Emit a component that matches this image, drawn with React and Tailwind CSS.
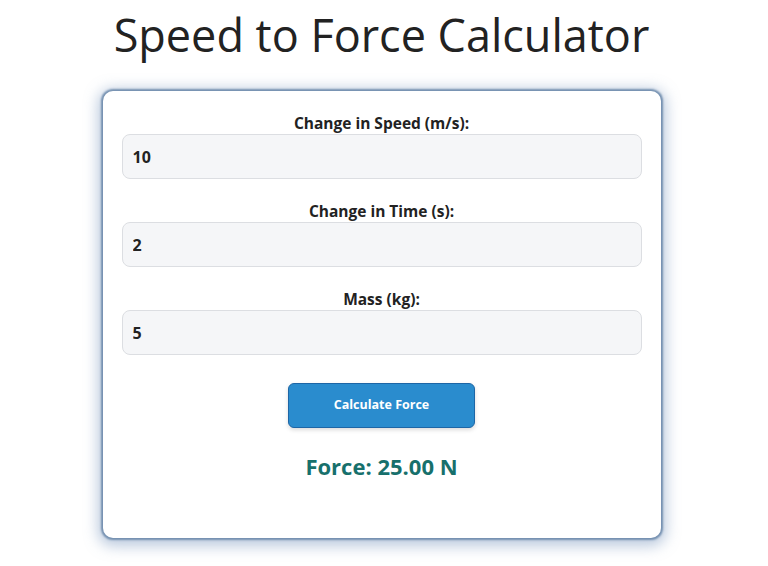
import { useState } from 'react'

const fields = [
  { id: 'speed', label: 'Change in Speed (m/s):', value: '10' },
  { id: 'time', label: 'Change in Time (s):', value: '2' },
  { id: 'mass', label: 'Mass (kg):', value: '5' },
]

export default function App() {
  const [values, setValues] = useState({ speed: '10', time: '2', mass: '5' })
  const [force, setForce] = useState(25)

  const calculate = () => {
    const dv = parseFloat(values.speed)
    const dt = parseFloat(values.time)
    const m = parseFloat(values.mass)
    if (dt) setForce((m * dv) / dt)
  }

  return (
    <div className="min-h-[566px] bg-white pr-[5px] flex flex-col items-center font-['Open_Sans',sans-serif] text-[#222]">
      <h1 className="mt-[7px] text-[45px] leading-[56px] text-[#222]">Speed to Force Calculator</h1>
      <div className="mt-[28px] w-[558px] h-[447px] rounded-[10px] bg-white px-[19px] pt-[22px] shadow-[0_0_2px_2px_rgba(105,135,170,0.9),0_3px_14px_5px_rgba(120,150,190,0.5)]">
        {fields.map((f) => (
          <div key={f.id} className="mb-[22px] flex flex-col">
            <label htmlFor={f.id} className="mb-px text-center text-[15.5px] leading-[20px] font-bold text-[#222]">
              {f.label}
            </label>
            <input
              id={f.id}
              type="number"
              value={values[f.id]}
              onChange={(e) => setValues({ ...values, [f.id]: e.target.value })}
              className="h-[45px] rounded-[8px] border border-[#dcdee2] bg-[#f5f6f8] px-[10px] text-[16px] font-bold text-[#222] outline-none"
            />
          </div>
        ))}
        <div className="mt-[28px] flex justify-center">
          <button
            onClick={calculate}
            className="h-[45px] w-[187px] rounded-[6px] border border-[#1d66a6] bg-[#2a8cce] text-[12.5px] font-bold text-white shadow-[0_2px_4px_rgba(0,0,0,0.15)]"
          >
            Calculate Force
          </button>
        </div>
        <p className="mt-[23px] text-center text-[22px] leading-[30px] font-bold text-[#17706c]">
          Force: {force.toFixed(2)} N
        </p>
      </div>
    </div>
  )
}
